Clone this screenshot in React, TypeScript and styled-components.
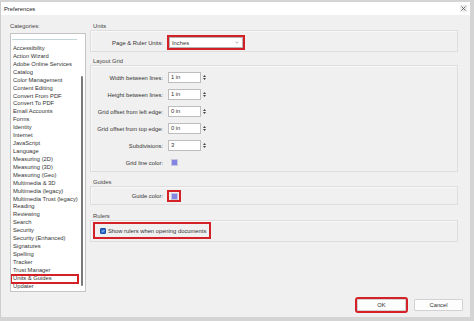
import React from 'react';
import styled, { createGlobalStyle } from 'styled-components';

const categories = [
  'Accessibility',
  'Action Wizard',
  'Adobe Online Services',
  'Catalog',
  'Color Management',
  'Content Editing',
  'Convert From PDF',
  'Convert To PDF',
  'Email Accounts',
  'Forms',
  'Identity',
  'Internet',
  'JavaScript',
  'Language',
  'Measuring (2D)',
  'Measuring (3D)',
  'Measuring (Geo)',
  'Multimedia & 3D',
  'Multimedia (legacy)',
  'Multimedia Trust (legacy)',
  'Reading',
  'Reviewing',
  'Search',
  'Security',
  'Security (Enhanced)',
  'Signatures',
  'Spelling',
  'Tracker',
  'Trust Manager',
  'Units & Guides',
  'Updater',
];

const gridFields = [
  { label: 'Width between lines:', value: '1 in' },
  { label: 'Height between lines:', value: '1 in' },
  { label: 'Grid offset from left edge:', value: '0 in' },
  { label: 'Grid offset from top edge:', value: '0 in' },
  { label: 'Subdivisions:', value: '3' },
];

const GlobalStyle = createGlobalStyle`
  html, body {
    margin: 0;
    padding: 0;
    background: #d4d4d4;
  }
  body {
    font-family: "Liberation Sans", Arial, sans-serif;
    color: #333;
  }
`;

const Spinner = () => (
  <S.Spinner>
    <svg width="3" height="2" viewBox="0 0 3 2">
      <path d="M0 2 L1.5 0 L3 2 Z" fill="#444" />
    </svg>
    <svg width="3" height="2" viewBox="0 0 3 2">
      <path d="M0 0 L1.5 2 L3 0 Z" fill="#444" />
    </svg>
  </S.Spinner>
);

const App = () => {
  return (
    <S.Screen>
      <GlobalStyle />
      <S.Window>
        <S.TitleBar>
          <span>Preferences</span>
          <S.Close>
            <svg width="5" height="5" viewBox="0 0 5 5">
              <path d="M0.5 0.5 L4.5 4.5 M4.5 0.5 L0.5 4.5" stroke="#555" strokeWidth="0.8" />
            </svg>
          </S.Close>
        </S.TitleBar>

        <S.Main>
          <S.Sidebar>
            <S.Caption>Categories:</S.Caption>
            <S.List>
              <S.Items>
                <S.ScrolledEdge />
                {categories.map((c) => (
                  <S.Item key={c} $marked={c === 'Units & Guides'}>
                    {c}
                  </S.Item>
                ))}
              </S.Items>
              <S.Gutter>
                <S.Thumb />
              </S.Gutter>
            </S.List>
          </S.Sidebar>

          <S.Pane>
            <S.GroupTitle>Units</S.GroupTitle>
            <S.Group>
              <S.Row>
                <S.Label>Page &amp; Ruler Units:</S.Label>
                <S.Select>
                  <span>Inches</span>
                  <svg width="4" height="3" viewBox="0 0 4 3">
                    <path d="M0.5 0.8 L2 2.2 L3.5 0.8" stroke="#777" strokeWidth="0.6" fill="none" />
                  </svg>
                </S.Select>
              </S.Row>
            </S.Group>

            <S.GroupTitle $gap={5}>Layout Grid</S.GroupTitle>
            <S.Group>
              {gridFields.map((f) => (
                <S.Row key={f.label}>
                  <S.Label>{f.label}</S.Label>
                  <S.SpinField>
                    <S.Input>{f.value}</S.Input>
                    <Spinner />
                  </S.SpinField>
                </S.Row>
              ))}
              <S.Row>
                <S.Label>Grid line color:</S.Label>
                <S.ColorButton>
                  <S.Swatch />
                </S.ColorButton>
              </S.Row>
            </S.Group>

            <S.GroupTitle $gap={6}>Guides</S.GroupTitle>
            <S.Group $pad="3px 0 2px">
              <S.Row $h={12}>
                <S.Label>Guide color:</S.Label>
                <S.ColorButton $marked>
                  <S.Swatch />
                </S.ColorButton>
              </S.Row>
            </S.Group>

            <S.GroupTitle $gap={7}>Rulers</S.GroupTitle>
            <S.Group $pad="3px 0 4px">
              <S.CheckRow>
                <S.Check>
                  <svg width="4" height="4" viewBox="0 0 4 4">
                    <path d="M0.6 2.1 L1.6 3 L3.4 1" stroke="#fff" strokeWidth="0.7" fill="none" />
                  </svg>
                </S.Check>
                <span>Show rulers when opening documents</span>
              </S.CheckRow>
            </S.Group>
          </S.Pane>
        </S.Main>

        <S.Footer>
          <S.Button $marked>OK</S.Button>
          <S.Button>Cancel</S.Button>
        </S.Footer>
      </S.Window>
    </S.Screen>
  );
};

const red = '#d42127';

const S = {
  Screen: styled.div`
    width: 474px;
    height: 321px;
    padding-top: 2px;
    box-sizing: border-box;
    background: #d4d4d4;
    overflow: hidden;
  `,
  Window: styled.div`
    width: 470px;
    height: 315px;
    box-sizing: border-box;
    border-left: 1px solid #cdcdcd;
    background: #f0f0f0;
    display: flex;
    flex-direction: column;
    font-size: 5.8px;
  `,
  TitleBar: styled.div`
    height: 13px;
    background: #fff;
    display: flex;
    align-items: center;
    justify-content: space-between;
    padding: 0 3px 0 3px;
    color: #222;
  `,
  Close: styled.div`
    width: 7px;
    height: 7px;
    display: flex;
    align-items: center;
    justify-content: center;
    background: #ececec;
  `,
  Main: styled.div`
    flex: 1;
    display: flex;
    gap: 4px;
    padding: 7px 6px 0 9px;
    min-height: 0;
  `,
  Sidebar: styled.div`
    width: 76px;
    display: flex;
    flex-direction: column;
  `,
  Caption: styled.div`
    height: 8px;
    line-height: 8px;
    color: #444;
  `,
  List: styled.div`
    margin-top: 3px;
    height: 259px;
    box-sizing: border-box;
    border: 1px solid #c4c4c4;
    background: #fff;
    display: flex;
    overflow: hidden;
  `,
  Items: styled.div`
    flex: 1;
    display: flex;
    flex-direction: column;
  `,
  ScrolledEdge: styled.div`
    height: 5px;
    margin: 0 1px 5px;
    border-bottom: 1px solid #c5d6da;
  `,
  Item: styled.div<{ $marked?: boolean }>`
    height: 7.93px;
    line-height: 7.93px;
    padding-left: 2px;
    white-space: nowrap;
    color: #333;
    outline: ${({ $marked }) => ($marked ? `2px solid ${red}` : 'none')};
    outline-offset: -1px;
  `,
  Gutter: styled.div`
    width: 8px;
    display: flex;
    flex-direction: column;
  `,
  Thumb: styled.div`
    margin: 42px 0 0 3px;
    width: 2px;
    height: 210px;
    border-radius: 1px;
    background: #7a7a7a;
  `,
  Pane: styled.div`
    flex: 1;
    display: flex;
    flex-direction: column;
  `,
  GroupTitle: styled.div<{ $gap?: number }>`
    height: 8px;
    line-height: 8px;
    margin-top: ${({ $gap }) => $gap ?? 0}px;
    padding-left: 3px;
    color: #444;
  `,
  Group: styled.div<{ $pad?: string }>`
    border: 1px solid #dedede;
    box-shadow: inset 1px 1px 0 #f8f8f8;
    padding: ${({ $pad }) => $pad ?? '3px 0 0'};
    margin-right: 6px;
  `,
  Row: styled.div<{ $h?: number }>`
    height: ${({ $h }) => $h ?? 17}px;
    display: flex;
    align-items: center;
    gap: 5px;
  `,
  Label: styled.div`
    width: 72px;
    text-align: right;
    white-space: nowrap;
    color: #333;
  `,
  Select: styled.div`
    margin-left: 1px;
    width: 74px;
    height: 11px;
    box-sizing: border-box;
    padding: 0 3px 0 2px;
    background: #fff;
    border: 1px solid #b4b4b4;
    display: flex;
    align-items: center;
    justify-content: space-between;
    outline: 2px solid ${red};
  `,
  SpinField: styled.div`
    display: flex;
    align-items: center;
  `,
  Input: styled.div`
    width: 33px;
    height: 11px;
    box-sizing: border-box;
    padding-left: 2px;
    line-height: 9px;
    background: #fff;
    border: 1px solid #bdbdbd;
  `,
  Spinner: styled.div`
    width: 7px;
    height: 11px;
    display: flex;
    flex-direction: column;
    align-items: center;
    justify-content: center;
    gap: 1px;
  `,
  ColorButton: styled.div<{ $marked?: boolean }>`
    width: 12px;
    height: 10px;
    display: flex;
    align-items: center;
    justify-content: center;
    outline: ${({ $marked }) => ($marked ? `2px solid ${red}` : 'none')};
    outline-offset: -1px;
  `,
  Swatch: styled.div`
    width: 5px;
    height: 5px;
    background: #8585e4;
    border: 1px solid #c8c8dc;
  `,
  CheckRow: styled.div`
    width: fit-content;
    margin-left: 4px;
    height: 13px;
    padding: 0 3px 0 5px;
    display: flex;
    align-items: center;
    gap: 2px;
    color: #333;
    outline: 2px solid ${red};
  `,
  Check: styled.div`
    width: 6px;
    height: 6px;
    box-sizing: border-box;
    background: #2567cf;
    border: 1px solid #1b4fa3;
    border-radius: 1px;
    display: flex;
    align-items: center;
    justify-content: center;
  `,
  Footer: styled.div`
    display: flex;
    justify-content: flex-end;
    gap: 8px;
    padding: 0 7px 6px 0;
  `,
  Button: styled.div<{ $marked?: boolean }>`
    width: 49px;
    height: 12px;
    box-sizing: border-box;
    background: #fdfdfd;
    border: 1px solid #d2d2d2;
    border-radius: 1px;
    display: flex;
    align-items: center;
    justify-content: center;
    color: #333;
    outline: ${({ $marked }) => ($marked ? `2px solid ${red}` : 'none')};
  `,
};

export default App;
